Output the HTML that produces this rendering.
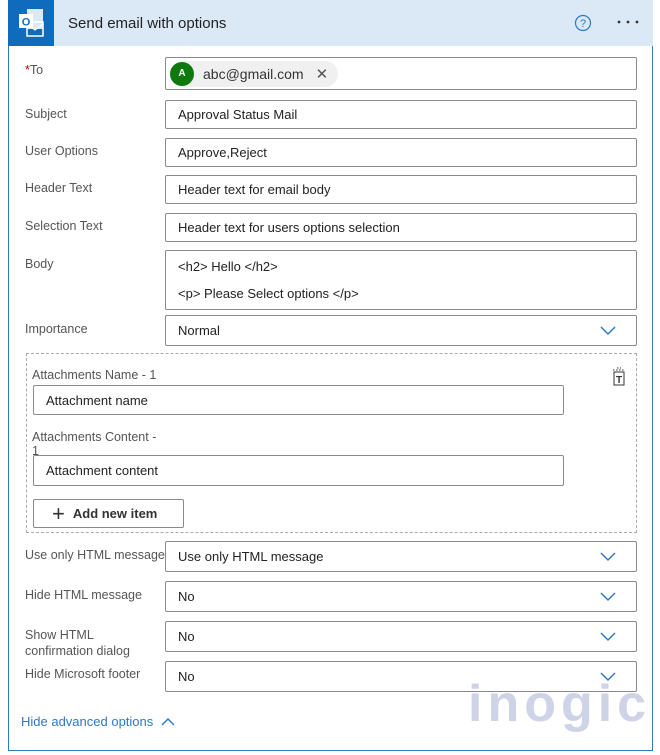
<!DOCTYPE html>
<html><head><style>
*{box-sizing:border-box;margin:0;padding:0}
body{width:660px;height:755px;background:#fff;font-family:"Liberation Sans",sans-serif;position:relative;overflow:hidden}
.card{position:absolute;left:8px;top:0;width:645px;height:751px;border:1px solid #2e78c4;border-top:none;background:#fff}
.hdr{position:absolute;left:8px;top:0;width:645px;height:46px;background:#dbe9f7}
.ico{position:absolute;left:8px;top:0;width:46px;height:46px;background:#0f6cbd}
.ttl{position:absolute;left:68px;top:15px;font-size:15px;color:#222}
.lbl{position:absolute;left:25px;font-size:12.5px;color:#555}
.inp{position:absolute;left:165px;width:472px;border:1px solid #8a8a8a;border-radius:2px;font-size:13px;color:#222;padding-left:12px;display:flex;align-items:center}
.chev{position:absolute;right:20px;top:50%;margin-top:-5px}
.a{position:absolute;border:1px solid #8a8a8a;border-radius:2px;font-size:13px;color:#222;padding-left:12px;display:flex;align-items:center}
</style></head><body>
<div class="card"></div>
<div class="hdr"></div>
<div class="ico"><svg width="46" height="46"><rect x="19" y="9" width="16" height="20" fill="#fff" opacity=".85"/><path d="M19 22 L35 22 L35 36 L19 36 Z" fill="none" stroke="#fff" stroke-width="1.5"/><path d="M19 24 L27 30 L35 24" fill="none" stroke="#fff" stroke-width="1.2"/><rect x="11" y="14" width="14" height="14" fill="#fff"/><text x="18" y="25.5" font-size="11" font-weight="bold" fill="#0f6cbd" text-anchor="middle" font-family="Liberation Sans">O</text></svg></div>
<div class="ttl">Send email with options</div>
<svg style="position:absolute;left:574px;top:14px" width="18" height="18"><circle cx="9" cy="9" r="7.5" fill="none" stroke="#2e78c4" stroke-width="1.2"/><text x="9" y="13" font-size="11" fill="#2e78c4" text-anchor="middle" font-family="Liberation Sans">?</text></svg>
<svg style="position:absolute;left:617px;top:20px" width="24" height="4"><circle cx="2" cy="2" r="1.4" fill="#333"/><circle cx="11" cy="2" r="1.4" fill="#333"/><circle cx="20" cy="2" r="1.4" fill="#333"/></svg>

<div class="lbl" style="top:63px"><span style="color:#c00">*</span>To</div>
<div class="inp" style="top:57px;height:33px;padding-left:4px"><div style="display:flex;align-items:center;background:#f0f0f0;border-radius:14px;height:26px;padding-right:10px"><span style="width:24px;height:24px;border-radius:12px;background:#0e7a0d;color:#fff;font-size:10px;font-weight:bold;display:flex;align-items:center;justify-content:center">A</span><span style="font-size:14px;color:#333;margin-left:9px">abc@gmail.com</span><span style="margin-left:12px;color:#555;font-size:15px">✕</span></div></div>

<div class="lbl" style="top:107px">Subject</div>
<div class="inp" style="top:100px;height:29px">Approval Status Mail</div>
<div class="lbl" style="top:144px">User Options</div>
<div class="inp" style="top:138px;height:29px">Approve,Reject</div>
<div class="lbl" style="top:181px">Header Text</div>
<div class="inp" style="top:175px;height:29px">Header text for email body</div>
<div class="lbl" style="top:219px">Selection Text</div>
<div class="inp" style="top:213px;height:29px">Header text for users options selection</div>
<div class="lbl" style="top:257px">Body</div>
<div class="inp" style="top:250px;height:60px;display:block;padding-top:2px;line-height:27px">&lt;h2&gt; Hello &lt;/h2&gt;<br>&lt;p&gt; Please Select options &lt;/p&gt;</div>
<div class="lbl" style="top:322px">Importance</div>
<div class="inp" style="top:315px;height:31px">Normal<svg class="chev" width="16" height="10"><path d="M1 1 L8 8 L15 1" fill="none" stroke="#2e78c4" stroke-width="1.5"/></svg></div>

<div style="position:absolute;left:26px;top:353px;width:611px;height:180px;border:1px dashed #aaa"></div>
<div class="lbl" style="left:32px;top:368px">Attachments Name - 1</div>
<svg style="position:absolute;left:610px;top:367px" width="18" height="20"><path d="M3 3 H15 M7 1 H11" stroke="#333" stroke-dasharray="1.5 1.5"/><rect x="4" y="5" width="10" height="13" fill="none" stroke="#333"/><text x="9" y="16" font-size="10" font-weight="bold" text-anchor="middle" fill="#333" font-family="Liberation Sans">T</text></svg>
<div class="a" style="left:33px;top:385px;width:531px;height:30px">Attachment name</div>
<div class="lbl" style="left:32px;top:430px;line-height:14px">Attachments Content -<br>1</div>
<div class="a" style="left:33px;top:455px;width:531px;height:31px;background:#fff">Attachment content</div>
<div class="a" style="left:33px;top:499px;width:151px;height:29px;padding-left:18px;font-weight:bold;color:#333"><span style="font-size:22px;font-weight:normal;margin-right:8px">+</span>Add new item</div>

<div class="lbl" style="top:548px">Use only HTML message</div>
<div class="inp" style="top:541px;height:31px">Use only HTML message<svg class="chev" width="16" height="10"><path d="M1 1 L8 8 L15 1" fill="none" stroke="#2e78c4" stroke-width="1.5"/></svg></div>
<div class="lbl" style="top:588px">Hide HTML message</div>
<div class="inp" style="top:581px;height:31px">No<svg class="chev" width="16" height="10"><path d="M1 1 L8 8 L15 1" fill="none" stroke="#2e78c4" stroke-width="1.5"/></svg></div>
<div class="lbl" style="top:627px;line-height:16px">Show HTML<br>confirmation dialog</div>
<div class="inp" style="top:621px;height:31px">No<svg class="chev" width="16" height="10"><path d="M1 1 L8 8 L15 1" fill="none" stroke="#2e78c4" stroke-width="1.5"/></svg></div>
<div class="lbl" style="top:667px">Hide Microsoft footer</div>
<div class="inp" style="top:661px;height:31px">No<svg class="chev" width="16" height="10"><path d="M1 1 L8 8 L15 1" fill="none" stroke="#2e78c4" stroke-width="1.5"/></svg></div>

<div style="position:absolute;left:21px;top:714px;font-size:13px;color:#2e78c4">Hide advanced options <svg width="14" height="9" style="margin-left:4px"><path d="M1 8 L7 2 L13 8" fill="none" stroke="#2e78c4" stroke-width="1.4"/></svg></div>
<div style="position:absolute;left:468px;top:674px;font-size:52px;font-weight:bold;color:#c9cfe6;letter-spacing:5px;opacity:.9">inogic</div>
</body></html>
